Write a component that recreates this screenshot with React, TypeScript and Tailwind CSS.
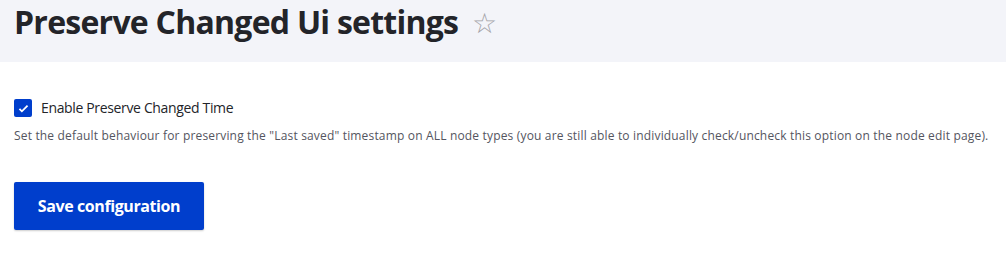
import React, { useState } from 'react';

export default function App() {
  const [checked, setChecked] = useState(true);

  return (
    <div className="min-h-screen bg-white text-[#232429]" style={{ fontFamily: '"Open Sans", "Noto Sans", sans-serif' }}>
      {/* 页面标题 */}
      <div className="h-[62px] bg-[#f3f4f9] px-[14px] flex items-start">
        <h1 className="flex items-center text-[32px] font-bold leading-[44px] tracking-[-0.75px]">
          Preserve Changed Ui settings
          <span className="ml-[14px] text-[28px] font-normal text-[#a3a3a8]">☆</span>
        </h1>
      </div>

      <form className="px-[14px] pt-[36px]">
        <div className="flex items-center gap-[9px]">
          <button
            type="button"
            onClick={() => setChecked(!checked)}
            className={`w-[18px] h-[18px] rounded-[2px] flex items-center justify-center ${
              checked ? 'bg-[#003ecc]' : 'border border-[#8e929c] bg-white'
            }`}
            aria-label="Enable Preserve Changed Time"
          >
            {checked && (
              <svg viewBox="0 0 16 16" className="w-[13px] h-[13px]">
                <path d="M3 8.5l3 3L13 4.5" fill="none" stroke="white" strokeWidth="2.2" />
              </svg>
            )}
          </button>
          <label className="text-[14px] leading-[20px] tracking-[-0.35px]">Enable Preserve Changed Time</label>
        </div>
        <p className="mt-[9px] text-[12px] leading-[18px] text-[#545560] tracking-[0.17px]">
          Set the default behaviour for preserving the "Last saved" timestamp on ALL node types (you are still able to individually check/uncheck this option on the node edit page).
        </p>

        <button
          type="button"
          className="mt-[37px] h-[48px] w-[190px] rounded-[2px] bg-[#003ecc] text-white text-[16px] font-bold tracking-[-0.4px] shadow-[0_1px_2px_rgba(0,0,0,0.2)]"
        >
          Save configuration
        </button>
      </form>
    </div>
  );
}
